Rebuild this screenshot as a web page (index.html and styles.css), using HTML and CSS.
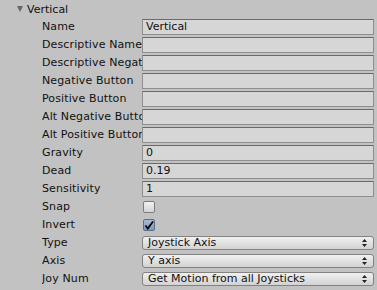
FILE: index.html
```html
<!DOCTYPE html>
<html lang="en">
<head>
    <meta charset="UTF-8">
    <title>Input Manager - Vertical</title>
    <link rel="stylesheet" href="styles.css">
</head>
<body>
    <div class="inspector">
        <div class="foldout">
            <span class="arrow"></span>
            <span>Vertical</span>
        </div>

        <div class="row">
            <div class="label">Name</div>
            <div class="field">Vertical</div>
        </div>
        <div class="row">
            <div class="label">Descriptive Name</div>
            <div class="field"></div>
        </div>
        <div class="row">
            <div class="label">Descriptive Negative Name</div>
            <div class="field"></div>
        </div>
        <div class="row">
            <div class="label">Negative Button</div>
            <div class="field"></div>
        </div>
        <div class="row">
            <div class="label">Positive Button</div>
            <div class="field"></div>
        </div>
        <div class="row">
            <div class="label">Alt Negative Button</div>
            <div class="field"></div>
        </div>
        <div class="row">
            <div class="label">Alt Positive Button</div>
            <div class="field"></div>
        </div>
        <div class="row">
            <div class="label">Gravity</div>
            <div class="field">0</div>
        </div>
        <div class="row">
            <div class="label">Dead</div>
            <div class="field">0.19</div>
        </div>
        <div class="row">
            <div class="label">Sensitivity</div>
            <div class="field">1</div>
        </div>
        <div class="row">
            <div class="label">Snap</div>
            <div class="toggle"></div>
        </div>
        <div class="row">
            <div class="label">Invert</div>
            <div class="toggle checked">
                <svg width="12" height="12" viewBox="0 0 12 12">
                    <path d="M2.5 6.5 L4.8 9.5 L10 2.5" fill="none" stroke="#000" stroke-width="1.8"/>
                </svg>
            </div>
        </div>
        <div class="row">
            <div class="label">Type</div>
            <div class="popup">
                <span>Joystick Axis</span>
                <svg width="5" height="8" viewBox="0 0 5 8">
                    <path d="M2.5 0 L5 3 L0 3 Z M0 5 L5 5 L2.5 8 Z" fill="#222"/>
                </svg>
            </div>
        </div>
        <div class="row">
            <div class="label">Axis</div>
            <div class="popup">
                <span>Y axis</span>
                <svg width="5" height="8" viewBox="0 0 5 8">
                    <path d="M2.5 0 L5 3 L0 3 Z M0 5 L5 5 L2.5 8 Z" fill="#222"/>
                </svg>
            </div>
        </div>
        <div class="row">
            <div class="label">Joy Num</div>
            <div class="popup">
                <span>Get Motion from all Joysticks</span>
                <svg width="5" height="8" viewBox="0 0 5 8">
                    <path d="M2.5 0 L5 3 L0 3 Z M0 5 L5 5 L2.5 8 Z" fill="#222"/>
                </svg>
            </div>
        </div>
    </div>
</body>
</html>
```

FILE: styles.css
```css
body {
    margin: 0;
    background-color: #c2c2c2;
    font-family: "DejaVu Sans", Verdana, sans-serif;
    font-size: 11px;
    color: #111;
}

.inspector {
    width: 377px;
    height: 290px;
    overflow: hidden;
}

.foldout {
    display: flex;
    align-items: center;
    height: 18px;
    padding-left: 17px;
}

/* triangle pointing down */
.arrow {
    width: 0;
    height: 0;
    border-left: 3.5px solid transparent;
    border-right: 3.5px solid transparent;
    border-top: 6px solid #666;
    margin-right: 4px;
}

.row {
    display: flex;
    align-items: flex-start;
    height: 18px;
    padding-left: 42px;
}

.label {
    width: 100px;
    flex-shrink: 0;
    line-height: 18px;
    letter-spacing: 0.12px;
    white-space: nowrap;
    overflow: hidden;
}

.field {
    box-sizing: border-box;
    width: 232px;
    height: 16px;
    margin-top: 1px;
    padding-left: 3px;
    line-height: 14px;
    background-color: #d6d6d6;
    border: 1px solid #8e8e8e;
    border-top-color: #6a6a6a;
}

.toggle {
    box-sizing: border-box;
    width: 12px;
    height: 12px;
    margin-top: 3px;
    margin-left: 1px;
    border: 1px solid #7d7d7d;
    border-radius: 2px;
    background: linear-gradient(#f2f2f2, #d4d4d4);
}

.toggle.checked {
    background: linear-gradient(#a9bbd6, #7d97bc);
    border-color: #5a6e8c;
    position: relative;
}

.toggle.checked svg {
    position: absolute;
    left: -1px;
    top: -1px;
}

.popup {
    box-sizing: border-box;
    display: flex;
    align-items: center;
    justify-content: space-between;
    width: 232px;
    height: 14px;
    margin-top: 2px;
    padding: 0 6px 0 5px;
    border: 1px solid #828282;
    border-radius: 3px;
    background: linear-gradient(#f0f0f0, #d2d2d2);
    line-height: 12px;
}
```
